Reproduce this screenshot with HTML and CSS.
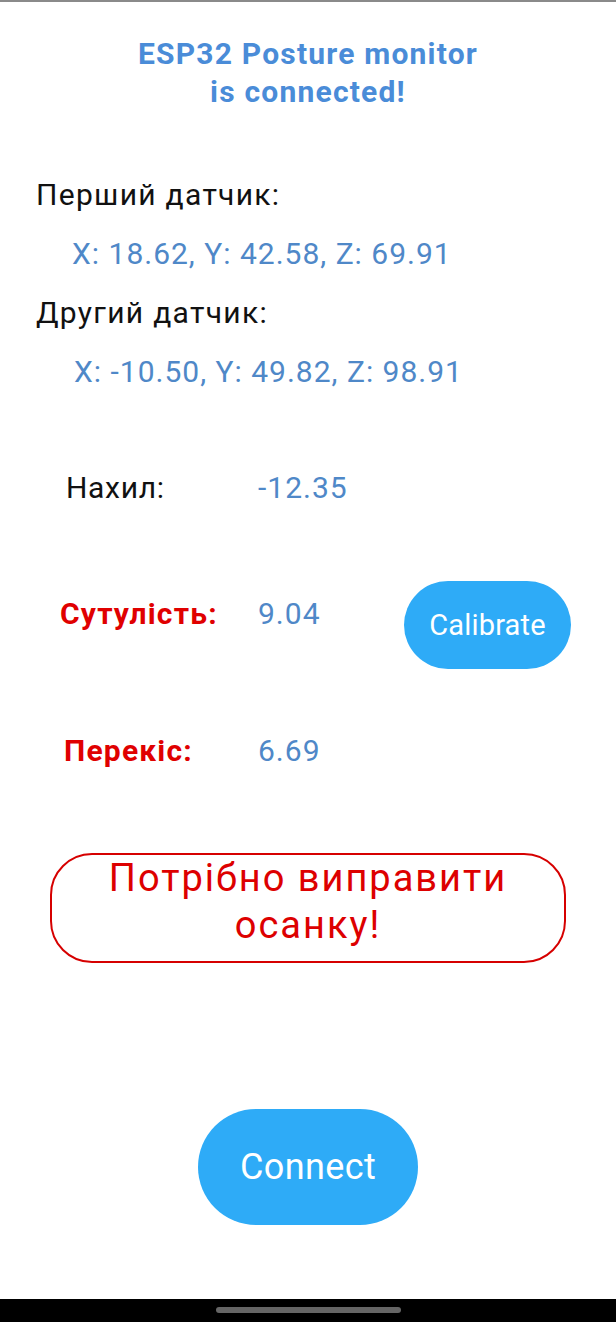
FILE: index.html
```html
<!DOCTYPE html>
<html lang="uk">
<head>
<meta charset="utf-8">
<title>ESP32 Posture monitor</title>
<link rel="stylesheet" href="styles.css">
</head>
<body>
<div class="screen">
  <div class="topline"></div>
  <main class="content">
    <h1 class="title">ESP32 Posture monitor<br>is connected!</h1>

    <section class="sensors">
      <div class="sensor-label">Перший датчик:</div>
      <div class="sensor-value">X: 18.62, Y: 42.58, Z: 69.91</div>
      <div class="sensor-label">Другий датчик:</div>
      <div class="sensor-value sensor-value--second">X: -10.50, Y: 49.82, Z: 98.91</div>
    </section>

    <section class="metrics">
      <div class="metric metric--tilt">
        <span class="metric-label">Нахил:</span>
        <span class="metric-value">-12.35</span>
      </div>
      <div class="metric metric--slouch">
        <span class="metric-label metric-label--alert">Сутулість:</span>
        <span class="metric-value">9.04</span>
        <button class="btn btn--calibrate">Calibrate</button>
      </div>
      <div class="metric metric--skew">
        <span class="metric-label metric-label--alert">Перекіс:</span>
        <span class="metric-value">6.69</span>
      </div>
    </section>

    <div class="warning">Потрібно виправити<br>осанку!</div>

    <div class="connect-wrap">
      <button class="btn btn--connect">Connect</button>
    </div>
  </main>
  <div class="navbar"><div class="nav-pill"></div></div>
</div>
</body>
</html>
```

FILE: styles.css
```css
* { box-sizing: border-box; }
html, body { margin: 0; padding: 0; background: #ffffff; }
body {
  font-family: Roboto, "Noto Sans", "Liberation Sans", sans-serif;
  color: #111111;
}
.screen {
  width: 616px;
  height: 1322px;
  display: flex;
  flex-direction: column;
  overflow: hidden;
}
.topline {
  height: 2px;
  background: #8a8a8a;
  flex: none;
}
.content {
  flex: 1;
  display: flex;
  flex-direction: column;
}
.title {
  margin: 33px 0 0;
  text-align: center;
  font-size: 30px;
  font-weight: 700;
  letter-spacing: 1.2px;
  line-height: 38px;
  color: #4a8cd8;
}
.sensors {
  margin-top: 54px;
  display: flex;
  flex-direction: column;
}
.sensor-label {
  padding-left: 36px;
  font-size: 30px;
  letter-spacing: 1.3px;
  line-height: 59px;
  color: #111111;
}
.sensor-value {
  padding-left: 72px;
  font-size: 30px;
  letter-spacing: 1px;
  line-height: 59px;
  color: #4f88c8;
}
.sensor-value--second { padding-left: 74px; }

.metrics {
  margin-top: 57px;
  display: flex;
  flex-direction: column;
}
.metric {
  display: grid;
  grid-template-columns: 258px 1fr auto;
  align-items: start;
  padding-right: 45px;
  font-size: 30px;
  line-height: 60px;
}
.metric--tilt { height: 60px; }
.metric--slouch { height: 88px; margin-top: 63px; }
.metric--skew { height: 60px; margin-top: 52px; }
.metric-label { padding-left: 66px; color: #111111; letter-spacing: 0.7px; }
.metric--slouch .metric-label { padding-left: 60px; }
.metric--skew .metric-label { padding-left: 64px; }
.metric-label--alert { color: #e00000; font-weight: 700; letter-spacing: 1.2px; }
.metric-value { color: #4f88c8; letter-spacing: 1px; }
.metric--slouch .metric-label,
.metric--slouch .metric-value { margin-top: 3px; }

.btn {
  border: none;
  background: #2eabf7;
  color: #ffffff;
  font-family: Roboto, "Noto Sans", "Liberation Sans", sans-serif;
  cursor: pointer;
}
.btn--calibrate {
  width: 167px;
  height: 88px;
  border-radius: 44px;
  font-size: 29px;
  letter-spacing: 0.2px;
  line-height: 1;
  padding: 0;
}

.warning {
  margin: 72px 50px 0 50px;
  height: 110px;
  border: 2.5px solid #d60000;
  border-radius: 42px;
  text-align: center;
  color: #dd0000;
  font-size: 38px;
  letter-spacing: 2px;
  line-height: 47px;
  padding-top: 0;
}

.connect-wrap {
  margin-top: 146px;
  display: flex;
  justify-content: center;
}
.btn--connect {
  width: 220px;
  height: 116px;
  border-radius: 58px;
  font-size: 36px;
  letter-spacing: 0.4px;
  line-height: 1;
  padding: 0;
}

.navbar {
  flex: none;
  height: 23px;
  background: #000000;
  display: flex;
  justify-content: center;
  padding-top: 8px;
}
.nav-pill {
  width: 185px;
  height: 6px;
  border-radius: 3px;
  background: #666666;
}
```
